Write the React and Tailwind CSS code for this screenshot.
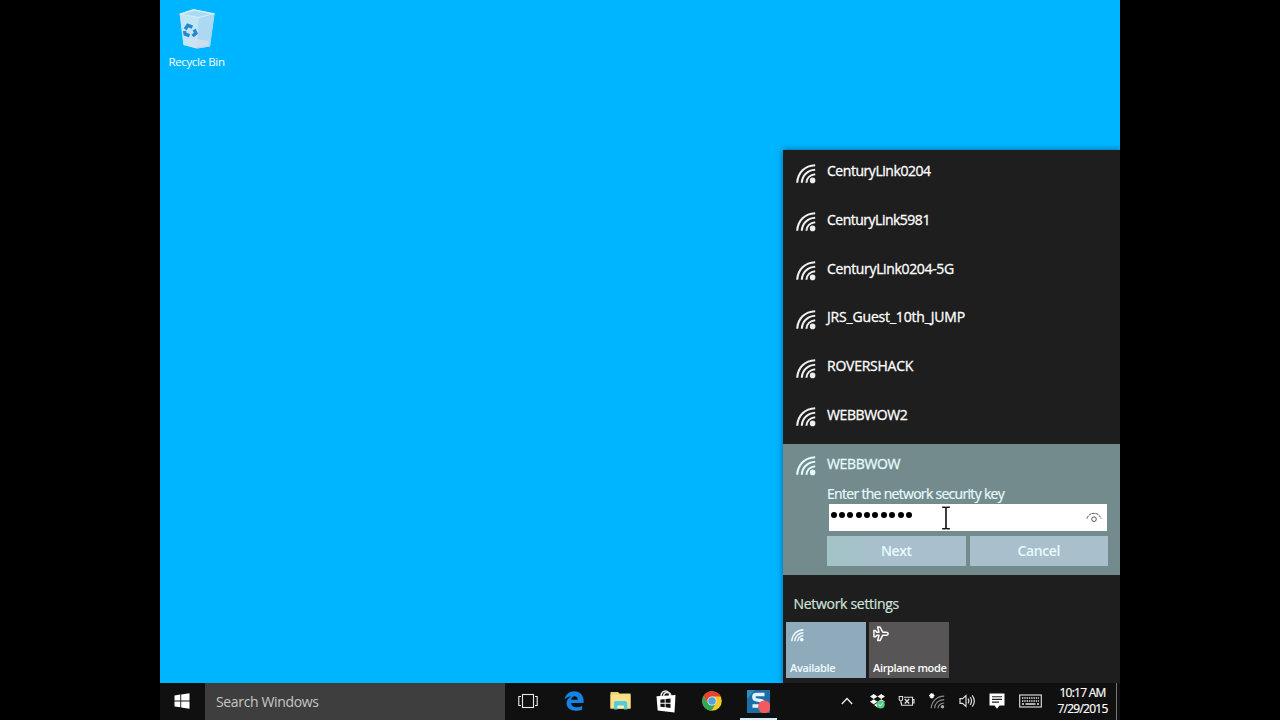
import React from 'react';

const NETWORKS = [
  { name: 'CenturyLink0204', tracking: 'tracking-[-0.45px]' },
  { name: 'CenturyLink5981', tracking: 'tracking-[-0.5px]' },
  { name: 'CenturyLink0204-5G', tracking: 'tracking-[-0.35px]' },
  { name: 'JRS_Guest_10th_JUMP', tracking: 'tracking-[-0.18px]' },
  { name: 'ROVERSHACK', tracking: 'tracking-[-0.25px]' },
  { name: 'WEBBWOW2', tracking: 'tracking-[-0.4px]' },
];

const WifiIcon = ({ className }) => (
  <svg viewBox="0 0 20 20" className={className} fill="none" stroke="currentColor" strokeWidth="2.1">
    <path d="M1.2 18.8C1.8 8.6 8.8 1.6 19.2 1.2" />
    <path d="M5.8 18.8C6.1 11.6 11.4 6.2 19.2 5.7" />
    <path d="M10.4 18.8C10.7 14.2 14 10.8 19.2 10.3" />
    <circle cx="16.6" cy="16.4" r="2.8" fill="currentColor" stroke="none" />
  </svg>
);

const RecycleBinIcon = () => (
  <svg viewBox="0 0 36 40" className="h-10 w-9">
    <path d="M0.7 5L14.5 0.5L35.5 4.8L31 37.5L18 39.5L4.5 36Z" fill="#a9d9f2" />
    <path d="M0.7 5L14.5 0.5L35.5 4.8L20 9Z" fill="#c2e4f3" stroke="#e3f5fc" strokeWidth="0.9" />
    <path d="M5 5.2L14.7 2.2L30.5 5L20 7.4Z" fill="#a9daf0" />
    <path d="M0.7 5L20 9L18 39.5L4.5 36Z" fill="#c0e6f6" />
    <path d="M20 9L35.5 4.8L31 37.5L18 39.5Z" fill="#acd8f1" />
    <path d="M9 31L18 30L30 32L29.5 37L18 38.5L9 36.5Z" fill="#d8def0" opacity="0.75" />
    <g fill="none" stroke="#2686ce" strokeWidth="3.4">
      <path d="M6.2 20.2L8.8 16.4L13.4 18.2" />
      <path d="M15.2 20.5L16.9 24.2L13.6 27" />
      <path d="M10.5 26.6L6.2 25.2L5.5 22" />
    </g>
  </svg>
);

const WindowsIcon = () => (
  <svg viewBox="0 0 16 16" className="mb-px mr-px h-4 w-4" fill="#fff">
    <path d="M0.5 2.4L6.3 1.6V7.5H0.5ZM7.2 1.4L15.5 0.2V7.5H7.2ZM0.5 8.4H6.3V14.2L0.5 13.4ZM7.2 8.4H15.5V15.8L7.2 14.5Z" />
  </svg>
);

const TaskViewIcon = () => (
  <svg viewBox="0 0 20 16" className="mr-px h-4 w-5" fill="none" stroke="#e8e8e8" strokeWidth="1.1">
    <rect x="4.5" y="1.5" width="11" height="13" />
    <path d="M3 3.5H0.8V12.5H3M17 3.5H19.2V12.5H17" />
  </svg>
);

const EdgeIcon = () => (
  <svg viewBox="0 0 20 20" className="h-5 w-5" fill="#1682e4">
    <path d="M0.5 8.8C1.4 3.5 5.2 0.3 10.2 0.3C16.2 0.3 19.6 4.6 19.6 10V12.1H7.1C7.3 15.1 9.6 16.3 12.4 16.3C14.7 16.3 16.6 15.6 18.1 14.7V18.4C16.3 19.4 14.2 19.8 11.8 19.8C6.3 19.8 2.5 16.8 2.5 12.3C2.5 9.2 4.3 6.8 7.1 5.4C4.1 5.4 1.8 6.8 0.5 8.8ZM7.2 8.7H13.8C13.8 6.6 12.6 5.2 10.7 5.2C8.8 5.2 7.5 6.7 7.2 8.7Z" />
  </svg>
);

const ExplorerIcon = () => (
  <svg viewBox="0 0 21 20" className="h-5 w-[21px]">
    <path d="M0.5 1H8L9.5 2.5H20.5V17.5H0.5Z" fill="#f3d067" />
    <path d="M0.5 3.5H20.5V17.5H0.5Z" fill="#fbe08a" />
    <path d="M4 18.6V12Q4 10 6 10H15Q17.2 10 17.2 12V18.6H13.8V15H7.5V18.6Z" fill="#4fcdd8" />
    <path d="M7.5 14.5H13.8V17.5H7.5Z" fill="#fbf0bd" />
  </svg>
);

const StoreIcon = () => (
  <svg viewBox="0 0 20 23" className="h-[23px] w-5">
    <path d="M5 6C5 3.2 7 1 9.3 1C12 1 13.8 3.2 13.8 6M7.5 6C7.8 4 9.5 2.4 11 2.4C13.6 2.4 14.8 4.2 14.8 6" fill="none" stroke="#e8e8e8" strokeWidth="1.5" />
    <path d="M0.5 6.2L19.5 5L18.5 22.5L1.7 20.5Z" fill="#fff" />
    <path d="M4.4 9.6L8.7 9.2V12.8H4.4ZM9.6 9.1L14.5 8.5V12.8H9.6ZM4.4 13.7H8.7V17.2L4.4 16.8ZM9.6 13.7H14.5V18L9.6 17.3Z" fill="#111" />
  </svg>
);

const ChromeIcon = () => (
  <svg viewBox="0 0 20 20" className="h-5 w-5">
    <circle cx="10" cy="10" r="9.8" fill="#f6c928" />
    <path d="M1.5 5.1A9.8 9.8 0 0 1 18.7 5.5H10L6 12.3Z" fill="#e5432f" />
    <path d="M1.5 5.1A9.8 9.8 0 0 0 9.5 19.8L14 12.2L6.1 12.3Z" fill="#31a853" />
    <circle cx="10" cy="10" r="4.6" fill="#e8f3f4" />
    <circle cx="10" cy="10" r="3.8" fill="#56a0dc" />
  </svg>
);

const RecorderIcon = () => (
  <svg viewBox="0 0 23 23" className="h-[23px] w-[23px]">
    <rect width="23" height="23" fill="#1c6ea8" />
    <path d="M0 0H8L0 9Z" fill="#328bbf" />
    <path d="M17.5 4.5H9.5Q6.8 4.5 6.8 7Q6.8 9.6 9.5 9.8L14 10.5Q16.5 11 16.2 13.5Q16 16 13 16H5.5" fill="none" stroke="#e4f4fd" strokeWidth="3.3" />
    <circle cx="17.4" cy="16.8" r="6.4" fill="#f25a5e" />
  </svg>
);

const DropboxIcon = () => (
  <svg viewBox="0 0 17 17" className="h-[17px] w-[17px]">
    <path d="M4.7 1L8.5 3.5L4.7 6L1 3.5ZM12.3 1L16 3.5L12.3 6L8.5 3.5ZM4.7 6.2L8.5 8.8L4.7 11.3L1 8.8ZM12.3 6.2L16 8.8L12.3 11.3L8.5 8.8ZM8.5 9.8L12 12L8.5 14.5L5 12Z" fill="#f4f4f4" />
    <circle cx="11.7" cy="11.6" r="4" fill="#53c987" />
    <path d="M9.8 11.5L11.3 13L13.7 10.2" stroke="#b6efcf" strokeWidth="1.1" fill="none" />
  </svg>
);

const BatteryIcon = () => (
  <svg viewBox="0 0 17 14" className="mb-[2px] mr-px h-3.5 w-[17px]" fill="none" stroke="#ddd" strokeWidth="1.1">
    <path d="M6 3.2H14.5V11.3H3.5V8.5M14.5 5.5H16V9H14.5" />
    <path d="M1.2 2.5V5.2Q1.2 6.7 2.8 6.7Q4.6 6.7 4.6 5.2V2.5ZM2.9 6.7V9.5" />
    <path d="M6.8 5L11.2 9.5M11.2 5L6.8 9.5" strokeWidth="1.4" />
  </svg>
);

const TrayWifiIcon = () => (
  <svg viewBox="0 0 18 18" className="mb-px h-[18px] w-[18px]" fill="none" stroke="#8c8c8c" strokeWidth="1.2">
    <path d="M3.2 16.3C3.6 9.5 8.4 4.6 16.2 4.2M6.6 16.3C6.9 11.5 10.4 8 16.2 7.7M10 16.3C10.2 13.4 12.5 11.3 16.2 11" />
    <circle cx="14.5" cy="14.8" r="1.7" fill="#aaa" stroke="none" />
    <path d="M3.8 1V6.4M1.1 3.7H6.5M2 1.9L5.6 5.5M5.6 1.9L2 5.5" stroke="#fff" />
  </svg>
);

const VolumeIcon = () => (
  <svg viewBox="0 0 17 16" className="mb-px h-4 w-[17px]" fill="none" stroke="#ddd" strokeWidth="1.2">
    <path d="M1 5.7H3.5L7 2.5V13.5L3.5 10.3H1Z" />
    <path d="M9 5.7Q10.6 8 9 10.3M11.1 4Q14 8 11.1 12M13.2 2.3Q17.5 8 13.2 13.7" />
  </svg>
);

const NotificationIcon = () => (
  <svg viewBox="0 0 16 16" className="mb-px h-4 w-4">
    <path d="M0.5 0.5H15.5V12.5H10.5L8 15.7L5.5 12.5H0.5Z" fill="#fff" />
    <path d="M3 3.7H13M3 6.4H13M3 9.1H10" stroke="#222" strokeWidth="1.1" />
  </svg>
);

const KeyboardIcon = () => (
  <svg viewBox="0 0 23 14" className="mb-[2px] h-3.5 w-[23px]" fill="none" stroke="#e4e4e4">
    <rect x="0.7" y="1" width="21.6" height="12" strokeWidth="1.1" />
    <path d="M3 4H20M3 7H20" strokeWidth="1.4" strokeDasharray="1.4 0.9" />
    <path d="M3 10H5M6.5 10H16.5M18 10H20" strokeWidth="1.3" />
  </svg>
);

const TextCursor = () => (
  <svg viewBox="0 0 10 24" className="absolute left-[112px] top-[2px] h-6 w-2.5" fill="none" stroke="#111" strokeWidth="1.6">
    <path d="M1.2 1.2H4L5 2L6 1.2H8.8M5 2V22M1.2 22.8H4L5 22L6 22.8H8.8" />
  </svg>
);

const RevealIcon = () => (
  <svg viewBox="0 0 16 12" className="mr-px h-3 w-4" fill="none" stroke="#555" strokeWidth="1">
    <path d="M0.8 6.7C2.3 3 4.8 1.3 8 1.3S13.7 3 15.2 6.7" strokeDasharray="3 0.6" />
    <circle cx="8" cy="7.2" r="2.3" />
  </svg>
);

const AirplaneIcon = () => (
  <svg viewBox="0 0 16 16" className="h-4 w-4" fill="none" stroke="#fff" strokeWidth="1.5" strokeLinejoin="round">
    <path d="M6 6.2L4.6 1H7L9.8 6.2H13.5Q15.2 6.4 15.2 7.7Q15.2 9 13.5 9.2H9.8L7 14.6H4.6L6 9.2H3.8L2.6 10.8H0.9V4.6H2.6L3.8 6.2Z" />
  </svg>
);

const NetworkRow = ({ network }) => (
  <div className="flex h-[48.8px] items-start pl-[13.5px]">
    <WifiIcon className="mt-[13.5px] h-5 w-5 shrink-0 text-[#eee]" />
    <span
      className={`ml-[11px] mt-[11px] text-[14px] leading-5 [-webkit-text-stroke:0.3px_currentColor] ${network.tracking}`}
    >
      {network.name}
    </span>
  </div>
);

const SelectedNetwork = () => (
  <div className="h-[131px] bg-[#738b8d] pl-[13.5px] pr-3 text-[#e6fbfd]">
    <div className="flex items-start">
      <WifiIcon className="mt-3 h-5 w-5 shrink-0" />
      <span className="ml-[11px] mt-[10px] text-[14px] leading-5 tracking-[-0.35px] [-webkit-text-stroke:0.3px_currentColor]">
        WEBBWOW
      </span>
    </div>
    <div className="ml-[31px]">
      <div className="mt-[7px] text-[14px] leading-[21px] tracking-[-0.7px] [-webkit-text-stroke:0.2px_currentColor]">
        Enter the network security key
      </div>
      <div className="relative ml-[1.5px] mr-px flex h-[27px] items-center justify-between bg-white pl-0.5 pr-1">
        <div className="mb-[5px] flex gap-[2.4px]">
          {Array.from({ length: 10 }, (_, i) => (
            <span key={i} className="h-[6px] w-[6px] rounded-full bg-black" />
          ))}
        </div>
        <RevealIcon />
        <TextCursor />
      </div>
      <div className="mt-[5px] flex gap-1 text-[14px] font-semibold leading-[30px] tracking-[-0.4px]">
        <button type="button" className="h-[30px] flex-1 bg-linear-to-r from-[#a2c4c5] to-[#a9bfcd] to-40%">
          Next
        </button>
        <button type="button" className="h-[30px] flex-1 bg-[#a9bfcc]">
          Cancel
        </button>
      </div>
    </div>
  </div>
);

const NetworkFlyout = () => (
  <section className="flex h-[533px] w-[337.5px] flex-col bg-[#1e1e1e] text-white shadow-[0_0_6px_rgba(0,40,80,0.6)]">
    {NETWORKS.map((network) => (
      <NetworkRow key={network.name} network={network} />
    ))}
    <div className="mt-[1.5px]">
      <SelectedNetwork />
    </div>
    <div className="ml-[11px] mt-[17px] text-[14px] leading-6 tracking-[-0.3px] text-[#cfe3dc] [-webkit-text-stroke:0.2px_currentColor]">
      Network settings
    </div>
    <div className="ml-[3.5px] mt-[6px] flex gap-[3px] text-[11px] font-semibold leading-4">
      <div className="flex h-14 w-20 flex-col justify-between bg-[#8faaba] pb-[2px] pl-1 pt-[7px] text-[#eefcff]">
        <WifiIcon className="ml-px h-[13px] w-[13px]" />
        <span className="tracking-[-0.35px]">Available</span>
      </div>
      <div className="flex h-14 w-20 flex-col justify-between bg-[#575556] pb-[2px] pl-1 pt-1">
        <AirplaneIcon />
        <span className="whitespace-nowrap tracking-[-0.35px]">Airplane mode</span>
      </div>
    </div>
  </section>
);

const Taskbar = () => (
  <footer className="flex h-[37px] bg-[#101010] text-white">
    <button type="button" className="flex w-[45px] items-center justify-center">
      <WindowsIcon />
    </button>
    <div className="flex w-[300px] items-center bg-[#3e3e3e] pl-[11px] text-[14px] tracking-[-0.35px] text-[#c6c6c6]">
      Search Windows
    </div>
    <div className="flex">
      {[TaskViewIcon, EdgeIcon, ExplorerIcon, StoreIcon, ChromeIcon].map((Icon, i) => (
        <div key={i} className="flex w-[46px] items-center justify-center pb-px">
          <Icon />
        </div>
      ))}
      <div className="flex w-[46px] flex-col items-center pt-[7px]">
        <RecorderIcon />
        <span className="mt-auto h-[2px] w-[37px] bg-[#d6edf8]" />
      </div>
    </div>
    <div className="ml-auto flex">
      <div className="flex w-[30px] items-center justify-center">
        <svg viewBox="0 0 12 8" className="mb-px h-2 w-3" fill="none" stroke="#e8e8e8" strokeWidth="1.4">
          <path d="M0.8 7L6 1.5L11.2 7" />
        </svg>
      </div>
      {[DropboxIcon, BatteryIcon, TrayWifiIcon, VolumeIcon, NotificationIcon].map((Icon, i) => (
        <div key={i} className="flex w-[30px] items-center justify-center">
          <Icon />
        </div>
      ))}
      <div className="flex w-[37px] items-center justify-center">
        <KeyboardIcon />
      </div>
      <div className="flex w-[67px] flex-col pt-[2px] text-center text-[12px] leading-4 tracking-[-0.75px] [-webkit-text-stroke:0.2px_currentColor]">
        <span>10:17 AM</span>
        <span>7/29/2015</span>
      </div>
      <div className="mr-[3px] w-px bg-[#777]" />
    </div>
  </footer>
);

const App = () => {
  return (
    <div className="flex h-[720px] w-[1280px] justify-center overflow-hidden bg-black font-['Open_Sans','Noto_Sans',sans-serif]">
      <main className="flex w-[960px] flex-col overflow-hidden bg-[#00b5ff]">
        <div className="flex h-[683px] justify-between">
          <div className="flex h-[76px] w-[73px] flex-col items-center pt-[9px] text-white">
            <RecycleBinIcon />
            <span className="mt-[5px] whitespace-nowrap text-[11.5px] leading-4 tracking-[-0.35px]">Recycle Bin</span>
          </div>
          <div className="flex items-end">
            <NetworkFlyout />
          </div>
        </div>
        <Taskbar />
      </main>
    </div>
  );
};

export default App;
